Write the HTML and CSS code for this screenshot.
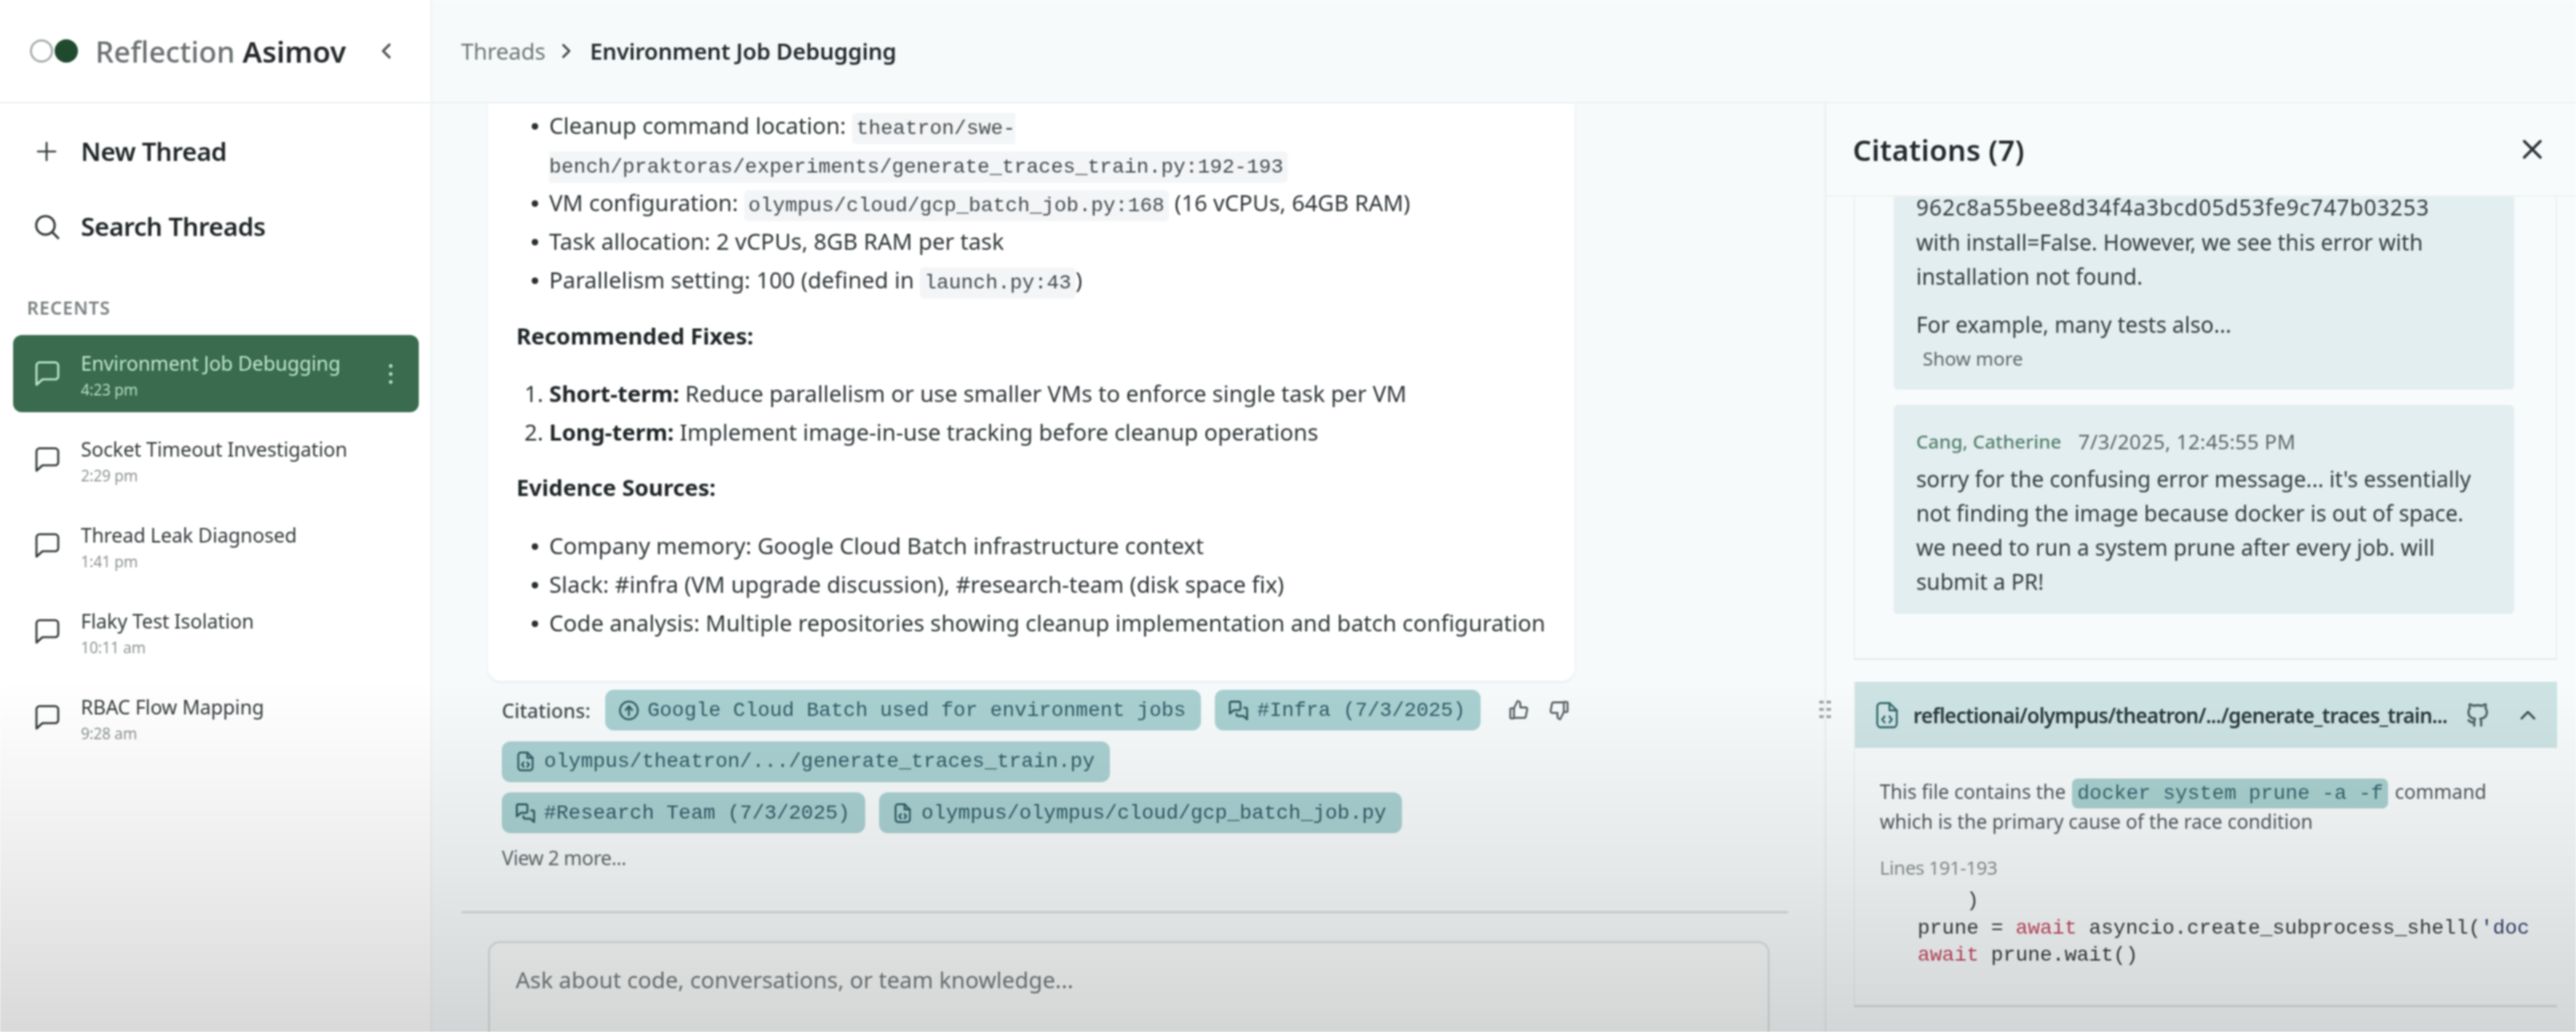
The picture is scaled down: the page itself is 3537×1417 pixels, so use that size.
FILE: index.html
```
<!DOCTYPE html>
<html lang="en">
<head>
<meta charset="utf-8">
<title>Reflection Asimov</title>
<link rel="stylesheet" href="styles.css">
</head>
<body>
<svg class="defs" width="0" height="0" aria-hidden="true">
  <symbol id="i-msg" viewBox="2 2 20 20.500"><path d="M3 5.500A2.500 2.500 0 0 1 5.500 3h13A2.500 2.500 0 0 1 21 5.500v9a2.500 2.500 0 0 1-2.500 2.500H8l-5 4.500z"/></symbol>
  <symbol id="i-file" viewBox="3 1 18 22"><path d="M14 2H7a3 3 0 0 0-3 3v14a3 3 0 0 0 3 3h10a3 3 0 0 0 3-3V8z"/><path d="M14 2v6h6"/><path d="M10 13l-2 2.500 2 2.500M14 13l2 2.500-2 2.500"/></symbol>
  <symbol id="i-chat" viewBox="2 1.500 20 20.500"><path d="M3 4a1.500 1.500 0 0 1 1.500-1.500h8A1.500 1.500 0 0 1 14 4v6a1.500 1.500 0 0 1-1.500 1.500H7L3 15z"/><path d="M18 9h1.500A1.500 1.500 0 0 1 21 10.500V21l-4-3.500h-5.500A1.500 1.500 0 0 1 10 16v-1"/></symbol>
  <symbol id="i-info" viewBox="1.500 1.500 21 21"><circle cx="12" cy="12" r="9.500"/><path d="M12 17V9M8.500 11.500 12 7.500l3.500 4"/></symbol>
</svg>
<div class="app">
  <aside class="sidebar">
    <div class="brand">
      <span class="logo"><span class="dot dot-open"></span><span class="dot dot-fill"></span></span>
      <span class="brand-name">Reflection <b>Asimov</b></span>
      <svg class="ico brand-back" viewBox="0 0 24 24"><path d="M15 5l-7 7 7 7"/></svg>
    </div>
    <nav class="side-nav">
      <div class="nav-row">
        <svg class="ico nav-ico nav-plus" viewBox="0 0 24 24"><path d="M12 3v18M3 12h18"/></svg>
        <span>New Thread</span>
      </div>
      <div class="nav-row">
        <svg class="ico nav-ico" viewBox="0 0 24 24"><circle cx="11" cy="11" r="8"/><path d="M17 17l5 5"/></svg>
        <span>Search Threads</span>
      </div>
    </nav>
    <div class="recents">RECENTS</div>
    <ul class="threads">
      <li class="thread-row is-active">
        <svg class="ico msg"><use href="#i-msg"/></svg>
        <div class="thread-text"><div class="thread-title">Environment Job Debugging</div><div class="thread-time">4:23 pm</div></div>
        <span class="kebab"><i></i><i></i><i></i></span>
      </li>
      <li class="thread-row">
        <svg class="ico msg"><use href="#i-msg"/></svg>
        <div class="thread-text"><div class="thread-title">Socket Timeout Investigation</div><div class="thread-time">2:29 pm</div></div>
      </li>
      <li class="thread-row">
        <svg class="ico msg"><use href="#i-msg"/></svg>
        <div class="thread-text"><div class="thread-title">Thread Leak Diagnosed</div><div class="thread-time">1:41 pm</div></div>
      </li>
      <li class="thread-row">
        <svg class="ico msg"><use href="#i-msg"/></svg>
        <div class="thread-text"><div class="thread-title">Flaky Test Isolation</div><div class="thread-time">10:11 am</div></div>
      </li>
      <li class="thread-row">
        <svg class="ico msg"><use href="#i-msg"/></svg>
        <div class="thread-text"><div class="thread-title">RBAC Flow Mapping</div><div class="thread-time">9:28 am</div></div>
      </li>
    </ul>
  </aside>
  <main class="main">
    <header class="topbar">
      <span class="crumb">Threads</span>
      <svg class="ico crumb-sep" viewBox="0 0 24 24"><path d="M9 5l7 7-7 7"/></svg>
      <span class="crumb-current">Environment Job Debugging</span>
    </header>
    <div class="content">
      <section class="thread">
        <article class="answer">
          <ul class="list">
            <li>Cleanup command location: <code>theatron/swe-<br>bench/praktoras/experiments/generate_traces_train.py:192-193</code></li>
            <li>VM configuration: <code>olympus/cloud/gcp_batch_job.py:168</code> (16 vCPUs, 64GB RAM)</li>
            <li>Task allocation: 2 vCPUs, 8GB RAM per task</li>
            <li>Parallelism setting: 100 (defined in <code>launch.py:43</code>)</li>
          </ul>
          <h4 class="h-fixes">Recommended Fixes:</h4>
          <ol class="list-num">
            <li><b>Short-term:</b> Reduce parallelism or use smaller VMs to enforce single task per VM</li>
            <li><b>Long-term:</b> Implement image-in-use tracking before cleanup operations</li>
          </ol>
          <h4 class="h-evidence">Evidence Sources:</h4>
          <ul class="list list-evidence">
            <li>Company memory: Google Cloud Batch infrastructure context</li>
            <li>Slack: #infra (VM upgrade discussion), #research-team (disk space fix)</li>
            <li>Code analysis: Multiple repositories showing cleanup implementation and batch configuration</li>
          </ul>
        </article>
        <div class="citations">
          <div class="cite-row">
            <span class="cite-label">Citations:</span>
            <span class="chip"><svg class="ico chip-ico"><use href="#i-info"/></svg>Google Cloud Batch used for environment jobs</span>
            <span class="chip"><svg class="ico chip-ico"><use href="#i-chat"/></svg>#Infra (7/3/2025)</span>
            <svg class="ico thumb thumb-up" viewBox="0 0 24 24"><path d="M7 10v11H4a1 1 0 0 1-1-1v-9a1 1 0 0 1 1-1zM7 10l4-8a3 3 0 0 1 3 3v4h5.500a2 2 0 0 1 2 2.400l-1.500 7.500a2 2 0 0 1-2 1.600H7"/></svg>
            <svg class="ico thumb" viewBox="0 0 24 24"><path d="M17 14V3h3a1 1 0 0 1 1 1v9a1 1 0 0 1-1 1zM17 14l-4 8a3 3 0 0 1-3-3v-4H4.500a2 2 0 0 1-2-2.400L4 5.100a2 2 0 0 1 2-1.600h11"/></svg>
          </div>
          <div class="cite-row">
            <span class="chip"><svg class="ico chip-ico"><use href="#i-file"/></svg>olympus/theatron/.../generate_traces_train.py</span>
          </div>
          <div class="cite-row">
            <span class="chip"><svg class="ico chip-ico"><use href="#i-chat"/></svg>#Research Team (7/3/2025)</span>
            <span class="chip"><svg class="ico chip-ico"><use href="#i-file"/></svg>olympus/olympus/cloud/gcp_batch_job.py</span>
          </div>
          <div class="view-more">View 2 more...</div>
        </div>
        <hr class="rule">
        <div class="composer">Ask about code, conversations, or team knowledge...</div>
      </section>
      <aside class="panel">
        <div class="grip"><i></i><i></i><i></i><i></i><i></i><i></i></div>
        <div class="panel-head">
          <h2 class="panel-title">Citations (7)</h2>
          <svg class="ico panel-close" viewBox="0 0 24 24"><path d="M5 5l14 14M19 5L5 19"/></svg>
        </div>
        <div class="panel-body">
          <div class="source source-slack">
            <div class="bubble bubble-first">
              <p class="msg-line"><span class="hash">962c8a55bee8d34f4a3bcd05d53fe9c747b03253</span>with install=False. However, we see this error with<br>installation not found.</p>
              <p class="msg-line msg-next">For example, many tests also...</p>
              <div class="show-more">Show more</div>
            </div>
            <div class="bubble bubble-second">
              <div class="msg-meta"><span class="author">Cang, Catherine</span><span class="stamp">7/3/2025, 12:45:55 PM</span></div>
              <p class="msg-line msg-body">sorry for the confusing error message... it's essentially<br>not finding the image because docker is out of space.<br>we need to run a system prune after every job. will<br>submit a PR!</p>
            </div>
          </div>
          <div class="source source-code">
            <div class="source-head">
              <svg class="ico head-file"><use href="#i-file"/></svg>
              <span class="source-name">reflectionai/olympus/theatron/.../generate_traces_train...</span>
              <svg class="ico head-gh" viewBox="0 0 24 24"><path d="M9 21v-3.500c0-1 .2-1.700.7-2.300-2.800-.3-5.700-1.400-5.700-6 0-1.300.5-2.400 1.200-3.200L5 2.500c1 0 2.300.5 3.500 1.400a12 12 0 0 1 7 0C16.700 3 18 2.500 19 2.500l-.2 3.500c.7.800 1.200 1.900 1.200 3.200 0 4.600-2.900 5.700-5.700 6 .5.600.7 1.300.7 2.300V21M9 18c-3 1-4-1-5-1.500"/></svg>
              <svg class="ico head-up" viewBox="0 0 24 24"><path d="M4 16l8-8 8 8"/></svg>
            </div>
            <div class="source-main">
              <p class="summary">This file contains the <span class="hl">docker system prune -a -f</span> command<br>which is the primary cause of the race condition</p>
              <div class="lines">Lines 191-193</div>
              <pre class="code">    )
prune = <span class="kw">await</span> asyncio.create_subprocess_shell(<span class="str">'doc</span>
<span class="kw">await</span> prune.wait()</pre>
            </div>
          </div>
        </div>
      </aside>
    </div>
  </main>
  <div class="shade"></div>
</div>
</body>
</html>
```

FILE: styles.css
```
* { box-sizing: border-box; }
html, body { margin: 0; height: 100%; overflow: hidden; }
body { font-family: "Noto Sans", "Liberation Sans", sans-serif; color: #3c4446; background: #fff; }
.defs { position: absolute; }
ul, ol { margin: 0; padding: 0; list-style: none; }
p, h2, h4 { margin: 0; }
.ico { fill: none; stroke: currentColor; stroke-width: 2; stroke-linecap: round; stroke-linejoin: round; flex: none; display: block; }

.app { position: relative; display: flex; height: 100vh; overflow: hidden; filter: blur(1px); }
.shade { position: absolute; inset: 0; pointer-events: none; background: linear-gradient(to bottom, rgba(0,0,0,0) 66%, rgba(0,0,0,.07) 84%, rgba(0,0,0,.15) 100%); }

/* sidebar */
.sidebar { width: 593px; flex: none; background: #fff; border-right: 2px solid #eef2f3; }
.brand { height: 142px; display: flex; align-items: center; padding-left: 41px; border-bottom: 2px solid #edf1f2; }
.logo { display: flex; gap: 2px; width: 66px; }
.dot { width: 32px; height: 32px; border-radius: 50%; }
.dot-open { border: 3px solid #a9adad; }
.dot-fill { background: #1f4a2e; }
.brand-name { margin-left: 24px; font-size: 40px; color: #6a6f70; white-space: nowrap; font-weight: 500; }
.brand-name b { color: #25292b; font-weight: 600; }
.brand-back { width: 30px; height: 30px; margin-left: 41px; color: #4f5556; stroke-width: 2.600; }
.side-nav { margin-top: 14px; }
.nav-row { height: 103px; display: flex; align-items: center; padding-left: 45px; font-size: 35px; font-weight: 600; color: #1f2527; letter-spacing: -0.5px; }
.nav-ico { width: 38px; height: 38px; margin-right: 28px; color: #33393a; }
.nav-plus { width: 32px; height: 32px; margin-left: 3px; margin-right: 31px; }
.recents { margin: 45px 0 23px 37px; font-size: 25px; line-height: 30px; font-weight: 600; color: #7a8081; letter-spacing: 1px; }
.threads { padding: 0 16px 0 18px; }
.thread-row { height: 106px; margin-bottom: 12px; padding-left: 30px; display: flex; align-items: center; border-radius: 12px; color: #343a3b; }
.is-active { background: #3a6b4e; color: #bfe8cb; }
.msg { width: 34px; height: 34px; margin-right: 29px; stroke-width: 1.700; }
.thread-text { flex: 1; min-width: 0; padding-top: 8px; }
.thread-title { font-size: 27px; line-height: 37px; white-space: nowrap; letter-spacing: -0.1px; }
.thread-time { font-size: 21px; line-height: 37px; color: #8f9596; letter-spacing: -0.2px; }
.is-active .thread-time { color: #b6dcc2; }
.kebab { display: flex; flex-direction: column; gap: 6px; margin-right: 36px; }
.kebab i { width: 5px; height: 5px; border-radius: 50%; background: #b6e0c4; display: block; }

/* main */
.main { flex: 1; min-width: 0; display: flex; flex-direction: column; background: #f7fafb; }
.topbar { height: 142px; flex: none; display: flex; align-items: center; padding-left: 40px; font-size: 31px; letter-spacing: -0.2px; border-bottom: 2px solid #edf1f2; }
.crumb { color: #6f7677; }
.crumb-sep { width: 28px; height: 28px; margin: 0 19px 0 14px; color: #3f4546; stroke-width: 2.600; }
.crumb-current { color: #272d2f; font-weight: 600; }
.content { flex: 1; min-height: 0; display: flex; }

.thread { width: 1912px; flex: none; padding-left: 77px; }
.answer { width: 1492px; height: 793px; padding: 4px 0 0 39px; background: #fff; border-radius: 0 0 18px 18px; box-shadow: 0 2px 4px rgba(40,60,70,.08); font-size: 31px; line-height: 53px; color: #2f3638; }
.list li { position: relative; margin-left: 45px; }
.list li::before { content: ""; position: absolute; left: -24px; top: 23px; width: 9px; height: 9px; border-radius: 50%; background: #2a3032; }
code { font-family: "Liberation Mono", monospace; font-size: 28px; line-height: 1; background: #f3f5f7; border-radius: 6px; padding: 6px 6px; color: #434a4c; }
h4 { font-size: 31px; line-height: 53px; font-weight: 700; color: #1f2527; }
.h-fixes { margin-top: 24px; }
.list-num { margin-top: 26px; counter-reset: n; }
.list-num li { margin-left: 11px; counter-increment: n; }
.list-num li::before { content: counter(n) ". "; }
.list-num b { font-weight: 700; color: #1f2527; }
.h-evidence { margin-top: 23px; }
.list-evidence { margin-top: 27px; }

.citations { padding: 12px 0 0 19px; }
.cite-row { display: flex; align-items: center; gap: 19px; margin-bottom: 14.500px; }
.cite-label { width: 123px; font-size: 27px; font-weight: 500; color: #434b4d; white-space: nowrap; }
.chip { height: 56px; display: inline-flex; align-items: center; padding: 0 21px 0 19px; border-radius: 12px; background: #a9d0d1; color: #2f5c66; font-family: "Liberation Mono", monospace; font-size: 28px; white-space: pre; }
.chip-ico { width: 27px; height: 27px; margin-right: 12px; color: #2d5a60; stroke-width: 2; }
.thumb { width: 30px; height: 30px; color: #5b6264; margin-left: 7px; stroke-width: 2.200; }
.thumb-up { margin-left: 18px; }
.view-more { margin-top: 17px; font-size: 27px; line-height: 34px; color: #5f6769; letter-spacing: -0.5px; }
.rule { margin: 56px 50px 0 -36px; border: 0; border-top: 3px solid #d9dddd; }
.composer { width: 1760px; height: 220px; margin-top: 38px; padding: 31px 35px; border: 3px solid #dfe3e4; border-radius: 16px 16px 0 0; background: #f9fbfb; font-size: 31px; line-height: 38px; color: #73797b; }

/* panel */
.panel { position: relative; flex: 1; min-width: 0; background: #f8fbfc; border-left: 3px solid #edf1f2; padding-left: 37px; padding-right: 26px; display: flex; flex-direction: column; }
.grip { position: absolute; left: -10px; top: 820px; display: grid; grid-template-columns: 6px 6px; gap: 6px 4px; }
.grip i { height: 4px; background: #9ea5a6; display: block; }
.panel-head { height: 128px; flex: none; display: flex; align-items: center; justify-content: space-between; padding-right: 24px; margin-right: -26px; margin-left: -37px; padding-left: 36px; border-bottom: 2px solid #eef2f3; }
.panel-title { font-size: 40px; font-weight: 600; color: #252b2d; letter-spacing: 0.2px; }
.panel-close { width: 38px; height: 38px; color: #2f3537; margin-right: 17px; stroke-width: 2.400; }
.panel-body { flex: 1; min-height: 0; }
.source-slack { height: 636px; padding-left: 53px; padding-right: 57px; border-bottom: 2px solid #e4e8e9; border-left: 2px solid #eef1f2; border-right: 2px solid #eef1f2; }
.bubble { background: #e3eef0; padding-left: 31px; font-size: 30px; line-height: 47px; color: #343c3e; white-space: nowrap; }
.bubble-first { height: 265px; border-radius: 0 0 6px 6px; }
.hash { display: block; line-height: 30px; margin-bottom: 8.500px; letter-spacing: 0.85px; }
.msg-next { margin-top: 19px; }
.show-more { margin-top: 6px; padding-left: 9px; font-size: 26px; line-height: 34px; color: #5e6668; }
.bubble-second { height: 287px; margin-top: 21px; padding-top: 33px; border-radius: 6px; }
.msg-meta { display: flex; gap: 23px; font-size: 26px; line-height: 34px; color: #5e6668; }
.stamp { font-size: 28px; letter-spacing: 0.3px; }
.author { color: #55806b; font-weight: 500; }
.msg-body { margin-top: 11px; }
.source-code { margin-top: 30px; height: 447px; border-bottom: 3px solid #dcdfe0; border-left: 2px solid #eef1f2; }
.source-head { height: 91px; display: flex; align-items: center; padding-left: 29px; background: #cde3e4; }
.head-file { width: 30px; height: 38px; color: #31676a; stroke-width: 1.600; }
.source-name { margin-left: 21px; width: 738px; white-space: nowrap; font-size: 28px; font-weight: 600; color: #2a383c; letter-spacing: -0.8px; }
.head-gh { width: 38px; height: 38px; margin-left: 18px; color: #4d6467; }
.head-up { width: 26px; height: 26px; margin-left: 37px; color: #3f5256; stroke-width: 2.800; }
.source-main { padding: 41px 0 0 34px; }
.summary { font-size: 26.500px; line-height: 39px; color: #50575a; white-space: nowrap; }
.hl { font-family: "Liberation Mono", monospace; font-size: 28px; color: #35656c; background: #a9d0d0; border-radius: 8px; padding: 5px 7px; margin: 0 2px; }
.lines { margin-top: 26px; font-size: 26px; line-height: 34px; color: #8a9193; letter-spacing: -0.5px; }
.code { margin: 10px 0 0 52px; font-family: "Liberation Mono", monospace; font-size: 28px; line-height: 37.500px; color: #343a3c; }
.kw { color: #c2485f; }
.str { color: #2f3f6b; }
```
